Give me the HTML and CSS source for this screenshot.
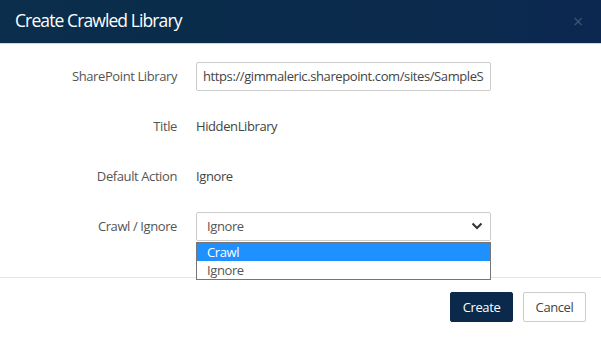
FILE: index.html
```html
<!DOCTYPE html>
<html lang="en">
  <head>
  <link rel="stylesheet" href="styles.css">
  </head>
  <body>
    <div class="modal">
      <div class="modal-header">
        <h1>Create Crawled Library</h1>
        <span class="close">&times;</span>
      </div>
      <div class="modal-body">
        <div class="form-row">
          <label>SharePoint Library</label>
          <input type="text" class="field" value="https://gimmaleric.sharepoint.com/sites/SampleSite/HiddenLibrary">
        </div>
        <div class="form-row">
          <label>Title</label>
          <span class="value">HiddenLibrary</span>
        </div>
        <div class="form-row">
          <label>Default Action</label>
          <span class="value">Ignore</span>
        </div>
        <div class="form-row">
          <label>Crawl / Ignore</label>
          <div class="dropdown">
            <div class="field select">
              <span>Ignore</span>
              <svg width="12" height="8" viewBox="0 0 12 8"><path d="M1.5 1.5 L6 6 L10.5 1.5" fill="none" stroke="#333" stroke-width="2"/></svg>
            </div>
            <ul class="options">
              <li class="active">Crawl</li>
              <li>Ignore</li>
            </ul>
          </div>
        </div>
      </div>
      <div class="modal-footer">
        <button class="btn btn-primary">Create</button>
        <button class="btn">Cancel</button>
      </div>
    </div>
  </body>
</html>
```

FILE: styles.css
```css
html, body { margin: 0; padding: 0; background: #fff; }
body { color: #333; font: 13px/1.4 "Open Sans", "Noto Sans", sans-serif; letter-spacing: -0.4px; }
input, button { font: inherit; letter-spacing: inherit; }

.modal-header {
  height: 44px; padding: 0 15px; box-sizing: border-box;
  display: flex; align-items: center; justify-content: space-between;
  background: linear-gradient(to right, #0a2e4b, #0b2a4c 70%, #0c2750);
  border-bottom: 1px solid #d0d6dc;
}
.modal-header h1 { margin: 0 0 2px; color: #fff; font-size: 17.5px; font-weight: 400; letter-spacing: -0.9px; }
.close { color: #3d5670; font-size: 18px; margin-right: 3px; }

.modal-body { padding: 7px 0 26px; }
.form-row {
  display: grid; grid-template-columns: 177px 295px; column-gap: 19px;
  align-items: center; height: 50px;
}
.form-row label { text-align: right; color: #555; }
.value { color: #444; }

.field {
  height: 29px; box-sizing: border-box; width: 100%;
  border: 1px solid #ccc; border-radius: 2px; background: #fff;
  padding: 0 6px; color: #444; overflow: hidden;
}
.dropdown { position: relative; }
.select { display: flex; align-items: center; justify-content: space-between; padding: 0 7px 0 10px; color: #555; }
.options {
  position: absolute; left: 0; top: 30px; width: 100%; box-sizing: border-box;
  margin: 0; padding: 0; list-style: none; background: #fff;
  border: 1px solid #767676; z-index: 2;
}
.options li { height: 18px; line-height: 18px; padding: 0 10px; color: #555; }
.options li.active { background: #1e90ff; color: #fff; }

.modal-footer {
  border-top: 1px solid #e5e5e5; padding: 14px 15px;
  display: flex; justify-content: flex-end; gap: 10px;
}
.btn {
  height: 30px; width: 63px; padding: 0;
  border: 1px solid #ccc; border-radius: 2px; background: #fff; color: #444; cursor: pointer;
}
.btn-primary { background: #0b2a4b; border-color: #0b2a4b; color: #fff; }
```
